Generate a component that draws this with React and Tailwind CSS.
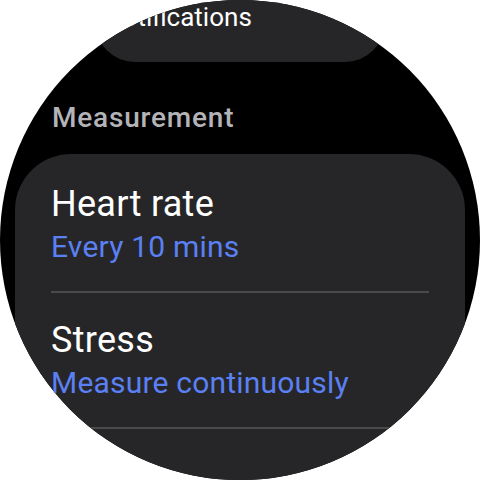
import React from "react";

const settings = [
	{ title: "Heart rate", value: "Every 10 mins" },
	{ title: "Stress", value: "Measure continuously" },
];

function SettingRow({ title, value, first }) {
	return (
		<div>
			<div className={first ? "pt-[29px] pb-[26px]" : "pt-[26px] pb-[26px]"}>
				<div className="text-[36px] leading-[42px] tracking-[0.3px] text-white">{title}</div>
				<div className="mt-[4px] text-[30px] leading-[36px] tracking-[0.2px] text-[#5b80f3]">
					{value}
				</div>
			</div>
			<div className="h-[2px] bg-[#4a4a4d]" />
		</div>
	);
}

export default function App() {
	return (
		<div className="w-[480px] h-[480px] bg-white">
			<div
				className="w-[480px] h-[480px] rounded-full bg-black overflow-hidden flex flex-col items-center"
				style={{ fontFamily: "Roboto, 'Noto Sans', sans-serif" }}
			>
				{/* card scrolled mostly off the top */}
				<div className="w-[290px] h-[100px] mt-[-38px] shrink-0 rounded-[40px] bg-[#262628] flex flex-col justify-end pb-[30px] pl-[9px]">
					<div className="text-[26px] leading-[30px] text-white">Notifications</div>
				</div>

				<div className="w-full pl-[52px] mt-[40px] text-[28px] leading-[32px] tracking-[0.8px] font-medium text-[#b3b3b8]">
					Measurement
				</div>

				<div className="w-[450px] mt-[20px] shrink-0 rounded-[56px] bg-[#262628] px-[36px] pb-[60px]">
					{settings.map((s, i) => (
						<SettingRow key={s.title} title={s.title} value={s.value} first={i === 0} />
					))}
				</div>
			</div>
		</div>
	);
}
